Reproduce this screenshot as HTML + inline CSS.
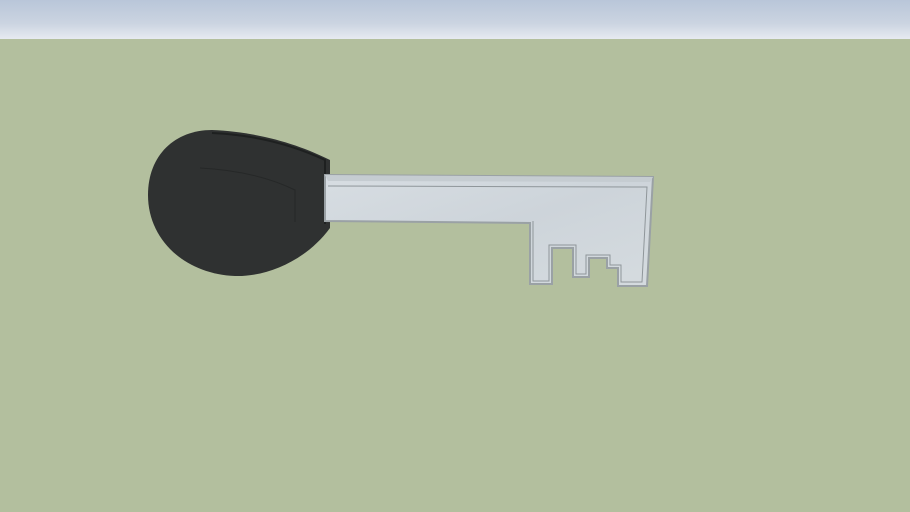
<!DOCTYPE html>
<html><head><style>
html,body{margin:0;padding:0;width:910px;height:512px;overflow:hidden;background:#b3bf9e}
.sky{position:absolute;left:0;top:0;width:910px;height:39px;background:linear-gradient(#b9c6d9,#cbd4e1 60%,#e6eaf0)}
svg{position:absolute;left:0;top:0}
</style></head><body>
<div class="sky"></div>
<svg width="910" height="512" viewBox="0 0 910 512">
<defs>
<linearGradient id="m" x1="0" y1="0" x2="1" y2="1">
<stop offset="0" stop-color="#d7dde2"/><stop offset="0.5" stop-color="#cdd4da"/><stop offset="1" stop-color="#d5dbdf"/>
</linearGradient>
</defs>
<path d="M212,130 C260,132 300,145 330,160 L330,228 C305,262 265,277 235,276 C185,274 148,240 148,195 C148,155 175,130 212,130 Z" fill="#2f3131"/>
<path d="M212,133 C258,135 295,146 325,160 L325,224" fill="none" stroke="#1e2020" stroke-width="2"/>
<path d="M200,168 C240,170 270,178 295,190 L295,222" fill="none" stroke="#262828" stroke-width="1"/>
<path d="M325,175 L653,177 L647,286 L618,286 L618,268 L607,268 L607,258 L589,258 L589,277 L573,277 L573,248 L552,248 L552,284 L530,284 L530,223 L325,221 Z" fill="url(#m)" stroke="#9aa1a5" stroke-width="2"/>
<path d="M328,186 L647,187 L642,282 L621,282 L621,265 L610,265 L610,255 L586,255 L586,274 L576,274 L576,245 L549,245 L549,281 L533,281 L533,221" fill="none" stroke="#8f969a" stroke-width="1"/>
<path d="M325,175 L653,177 L650,182 L328,181 Z" fill="#c5ccd1"/>
</svg>
</body></html>
